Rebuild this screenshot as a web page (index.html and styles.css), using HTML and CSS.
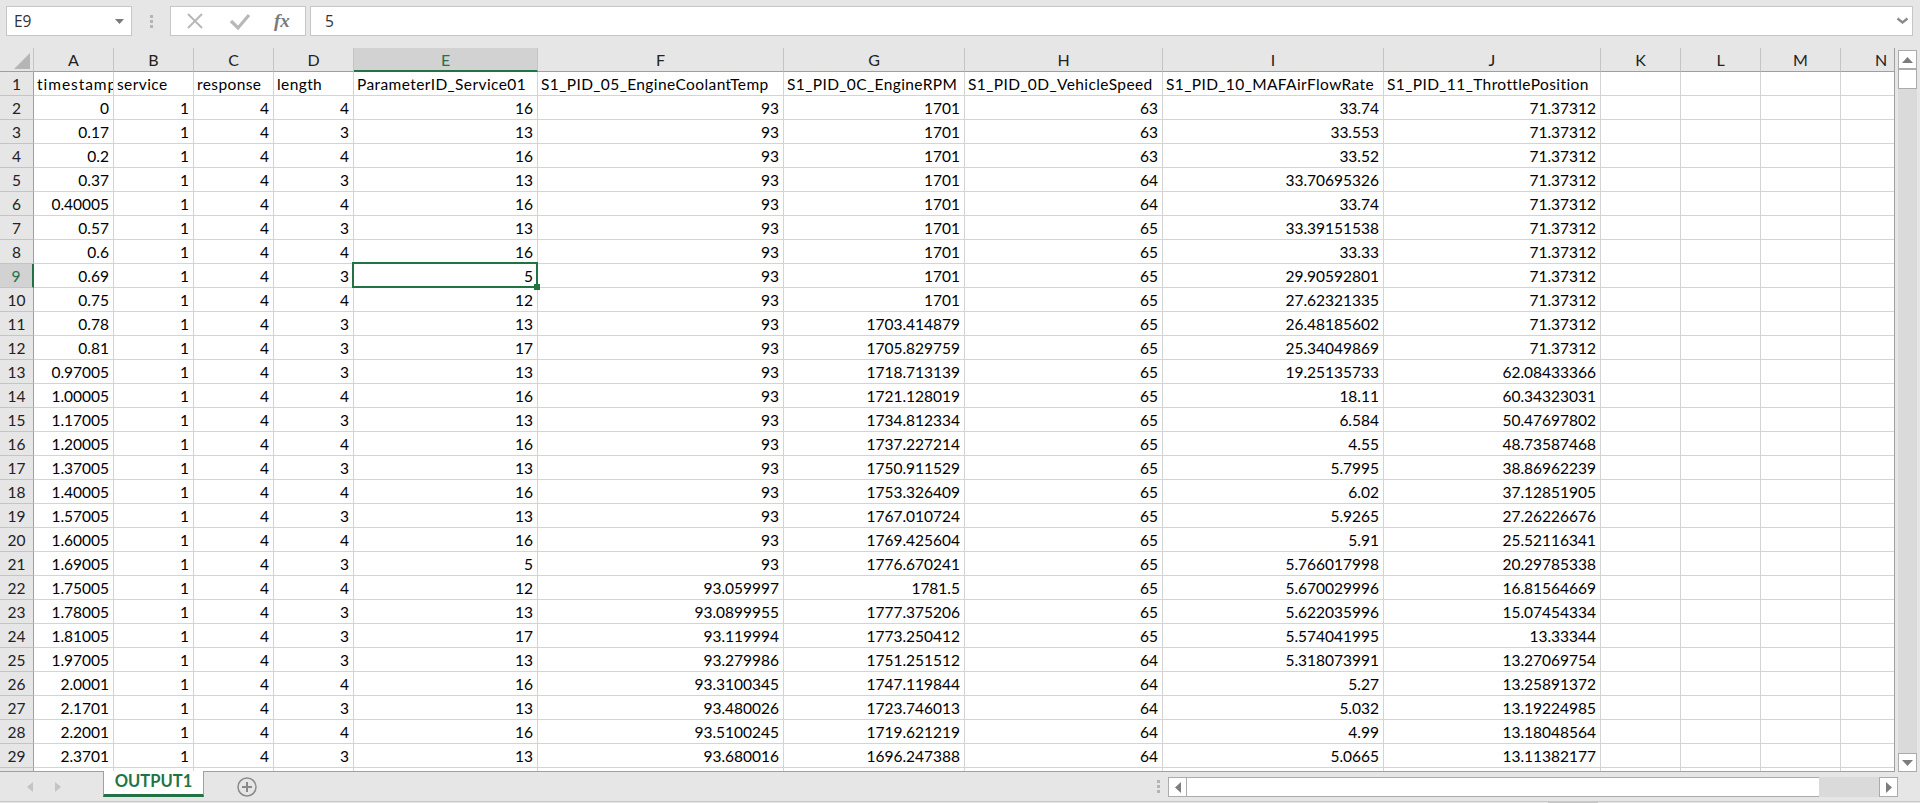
FILE: index.html
```html
<!DOCTYPE html>
<html lang="en">
<head>
<meta charset="utf-8">
<title>OUTPUT1</title>
<link rel="stylesheet" href="styles.css">
</head>
<body>
<div class="fbar">
  <div class="namebox"><span>E9</span><svg class="tri" width="9" height="5" viewBox="0 0 9 5"><path d="M0 0h9L4.500 5z"/></svg></div>
  <div class="grip"><i></i><i></i><i></i></div>
  <div class="fnbox">
    <svg width="20" height="20" viewBox="0 0 20 20" class="ic-x"><path d="M3 3l14 14M17 3L3 17"/></svg>
    <svg width="22" height="20" viewBox="0 0 22 20" class="ic-ok"><path d="M2 10l7 7L20 4"/></svg>
    <span class="fx">fx</span>
  </div>
  <div class="formula"><span>5</span><svg class="chev" width="13" height="8" viewBox="0 0 13 8"><path d="M1.500 1.500l5 4 5-4"/></svg></div>
</div>
<div class="sheet">
  <div class="gridwrap">
    <table class="grid">
      <colgroup><col class="c-rh"><col class="c-s"><col class="c-s"><col class="c-s"><col class="c-s"><col class="c-e"><col class="c-f"><col class="c-g"><col class="c-h"><col class="c-i"><col class="c-j"><col class="c-s"><col class="c-s"><col class="c-s"><col class="c-n"></colgroup>
      <thead><tr><th class="corner"><svg width="18" height="18" viewBox="0 0 18 18"><path d="M17 1v16H1z"/></svg></th><th>A</th><th>B</th><th>C</th><th>D</th><th class="on">E</th><th>F</th><th>G</th><th>H</th><th>I</th><th>J</th><th>K</th><th>L</th><th>M</th><th class="cut">N</th></tr></thead>
      <tbody>
<tr class="head"><th>1</th><td class="clip">timestamp</td><td>service</td><td>response</td><td>length</td><td>ParameterID_Service01</td><td>S1_PID_05_EngineCoolantTemp</td><td>S1_PID_0C_EngineRPM</td><td>S1_PID_0D_VehicleSpeed</td><td>S1_PID_10_MAFAirFlowRate</td><td>S1_PID_11_ThrottlePosition</td><td></td><td></td><td></td><td></td></tr>
<tr><th>2</th><td>0</td><td>1</td><td>4</td><td>4</td><td>16</td><td>93</td><td>1701</td><td>63</td><td>33.74</td><td>71.37312</td><td></td><td></td><td></td><td></td></tr>
<tr><th>3</th><td>0.17</td><td>1</td><td>4</td><td>3</td><td>13</td><td>93</td><td>1701</td><td>63</td><td>33.553</td><td>71.37312</td><td></td><td></td><td></td><td></td></tr>
<tr><th>4</th><td>0.2</td><td>1</td><td>4</td><td>4</td><td>16</td><td>93</td><td>1701</td><td>63</td><td>33.52</td><td>71.37312</td><td></td><td></td><td></td><td></td></tr>
<tr><th>5</th><td>0.37</td><td>1</td><td>4</td><td>3</td><td>13</td><td>93</td><td>1701</td><td>64</td><td>33.70695326</td><td>71.37312</td><td></td><td></td><td></td><td></td></tr>
<tr><th>6</th><td>0.40005</td><td>1</td><td>4</td><td>4</td><td>16</td><td>93</td><td>1701</td><td>64</td><td>33.74</td><td>71.37312</td><td></td><td></td><td></td><td></td></tr>
<tr><th>7</th><td>0.57</td><td>1</td><td>4</td><td>3</td><td>13</td><td>93</td><td>1701</td><td>65</td><td>33.39151538</td><td>71.37312</td><td></td><td></td><td></td><td></td></tr>
<tr><th>8</th><td>0.6</td><td>1</td><td>4</td><td>4</td><td>16</td><td>93</td><td>1701</td><td>65</td><td>33.33</td><td>71.37312</td><td></td><td></td><td></td><td></td></tr>
<tr><th class="on">9</th><td>0.69</td><td>1</td><td>4</td><td>3</td><td class="sel">5<span class="box"><span class="handle"></span></span></td><td>93</td><td>1701</td><td>65</td><td>29.90592801</td><td>71.37312</td><td></td><td></td><td></td><td></td></tr>
<tr><th>10</th><td>0.75</td><td>1</td><td>4</td><td>4</td><td>12</td><td>93</td><td>1701</td><td>65</td><td>27.62321335</td><td>71.37312</td><td></td><td></td><td></td><td></td></tr>
<tr><th>11</th><td>0.78</td><td>1</td><td>4</td><td>3</td><td>13</td><td>93</td><td>1703.414879</td><td>65</td><td>26.48185602</td><td>71.37312</td><td></td><td></td><td></td><td></td></tr>
<tr><th>12</th><td>0.81</td><td>1</td><td>4</td><td>3</td><td>17</td><td>93</td><td>1705.829759</td><td>65</td><td>25.34049869</td><td>71.37312</td><td></td><td></td><td></td><td></td></tr>
<tr><th>13</th><td>0.97005</td><td>1</td><td>4</td><td>3</td><td>13</td><td>93</td><td>1718.713139</td><td>65</td><td>19.25135733</td><td>62.08433366</td><td></td><td></td><td></td><td></td></tr>
<tr><th>14</th><td>1.00005</td><td>1</td><td>4</td><td>4</td><td>16</td><td>93</td><td>1721.128019</td><td>65</td><td>18.11</td><td>60.34323031</td><td></td><td></td><td></td><td></td></tr>
<tr><th>15</th><td>1.17005</td><td>1</td><td>4</td><td>3</td><td>13</td><td>93</td><td>1734.812334</td><td>65</td><td>6.584</td><td>50.47697802</td><td></td><td></td><td></td><td></td></tr>
<tr><th>16</th><td>1.20005</td><td>1</td><td>4</td><td>4</td><td>16</td><td>93</td><td>1737.227214</td><td>65</td><td>4.55</td><td>48.73587468</td><td></td><td></td><td></td><td></td></tr>
<tr><th>17</th><td>1.37005</td><td>1</td><td>4</td><td>3</td><td>13</td><td>93</td><td>1750.911529</td><td>65</td><td>5.7995</td><td>38.86962239</td><td></td><td></td><td></td><td></td></tr>
<tr><th>18</th><td>1.40005</td><td>1</td><td>4</td><td>4</td><td>16</td><td>93</td><td>1753.326409</td><td>65</td><td>6.02</td><td>37.12851905</td><td></td><td></td><td></td><td></td></tr>
<tr><th>19</th><td>1.57005</td><td>1</td><td>4</td><td>3</td><td>13</td><td>93</td><td>1767.010724</td><td>65</td><td>5.9265</td><td>27.26226676</td><td></td><td></td><td></td><td></td></tr>
<tr><th>20</th><td>1.60005</td><td>1</td><td>4</td><td>4</td><td>16</td><td>93</td><td>1769.425604</td><td>65</td><td>5.91</td><td>25.52116341</td><td></td><td></td><td></td><td></td></tr>
<tr><th>21</th><td>1.69005</td><td>1</td><td>4</td><td>3</td><td>5</td><td>93</td><td>1776.670241</td><td>65</td><td>5.766017998</td><td>20.29785338</td><td></td><td></td><td></td><td></td></tr>
<tr><th>22</th><td>1.75005</td><td>1</td><td>4</td><td>4</td><td>12</td><td>93.059997</td><td>1781.5</td><td>65</td><td>5.670029996</td><td>16.81564669</td><td></td><td></td><td></td><td></td></tr>
<tr><th>23</th><td>1.78005</td><td>1</td><td>4</td><td>3</td><td>13</td><td>93.0899955</td><td>1777.375206</td><td>65</td><td>5.622035996</td><td>15.07454334</td><td></td><td></td><td></td><td></td></tr>
<tr><th>24</th><td>1.81005</td><td>1</td><td>4</td><td>3</td><td>17</td><td>93.119994</td><td>1773.250412</td><td>65</td><td>5.574041995</td><td>13.33344</td><td></td><td></td><td></td><td></td></tr>
<tr><th>25</th><td>1.97005</td><td>1</td><td>4</td><td>3</td><td>13</td><td>93.279986</td><td>1751.251512</td><td>64</td><td>5.318073991</td><td>13.27069754</td><td></td><td></td><td></td><td></td></tr>
<tr><th>26</th><td>2.0001</td><td>1</td><td>4</td><td>4</td><td>16</td><td>93.3100345</td><td>1747.119844</td><td>64</td><td>5.27</td><td>13.25891372</td><td></td><td></td><td></td><td></td></tr>
<tr><th>27</th><td>2.1701</td><td>1</td><td>4</td><td>3</td><td>13</td><td>93.480026</td><td>1723.746013</td><td>64</td><td>5.032</td><td>13.19224985</td><td></td><td></td><td></td><td></td></tr>
<tr><th>28</th><td>2.2001</td><td>1</td><td>4</td><td>4</td><td>16</td><td>93.5100245</td><td>1719.621219</td><td>64</td><td>4.99</td><td>13.18048564</td><td></td><td></td><td></td><td></td></tr>
<tr><th>29</th><td>2.3701</td><td>1</td><td>4</td><td>3</td><td>13</td><td>93.680016</td><td>1696.247388</td><td>64</td><td>5.0665</td><td>13.11382177</td><td></td><td></td><td></td><td></td></tr>
<tr><th></th><td></td><td></td><td></td><td></td><td></td><td></td><td></td><td></td><td></td><td></td><td></td><td></td><td></td><td></td></tr>
      </tbody>
    </table>
  </div>
  <div class="vscroll">
    <div class="sbtn"><svg width="11" height="6" viewBox="0 0 11 6"><path d="M5.500 0L11 6H0z"/></svg></div>
    <div class="vthumb"></div>
    <div class="vtrack"></div>
    <div class="sbtn"><svg width="11" height="6" viewBox="0 0 11 6"><path d="M0 0h11L5.500 6z"/></svg></div>
  </div>
</div>
<div class="tabs">
  <div class="nav">
    <svg width="6" height="10" viewBox="0 0 6 10"><path d="M6 0v10L0 5z"/></svg>
    <svg width="6" height="10" viewBox="0 0 6 10"><path d="M0 0v10l6-5z"/></svg>
  </div>
  <div class="tab">OUTPUT1</div>
  <svg class="add" width="20" height="20" viewBox="0 0 20 20"><circle cx="10" cy="10" r="9"/><path d="M10 5v10M5 10h10"/></svg>
  <div class="grip hgrip"><i></i><i></i><i></i></div>
  <div class="hscroll">
    <div class="sbtn hbtn"><svg width="6" height="11" viewBox="0 0 6 11"><path d="M6 0v11L0 5.500z"/></svg></div>
    <div class="hthumb"></div>
    <div class="htrack"></div>
    <div class="sbtn hbtn"><svg width="6" height="11" viewBox="0 0 6 11"><path d="M0 0v11l6-5.500z"/></svg></div>
  </div>
</div>
<div class="status"><div class="sliver"></div></div>
</body>
</html>
```
FILE: styles.css
```css
* { box-sizing: border-box; }
html, body { margin: 0; padding: 0; }
body {
  width: 1920px;
  height: 803px;
  overflow: hidden;
  display: flex;
  flex-direction: column;
  background: #e6e6e6;
  font-family: Lato, "Liberation Sans", sans-serif;
  color: #000;
}

/* formula bar */
.fbar {
  height: 48px;
  flex: none;
  display: flex;
  align-items: flex-start;
  padding: 6px 7px 0 6px;
  font-family: "Open Sans", "Liberation Sans", sans-serif;
  font-size: 15.500px;
  color: #333;
}
.namebox, .fnbox, .formula {
  height: 30px;
  background: #fff;
  border: 1px solid #c6c6c6;
  display: flex;
  align-items: center;
}
.namebox { width: 126px; padding: 0 7px; justify-content: space-between; }
.tri path { fill: #7a7a7a; }
.grip { width: 38px; height: 30px; display: flex; flex-direction: column; align-items: center; justify-content: center; gap: 2px; }
.grip i { width: 3px; height: 3px; background: #b4b4b4; display: block; }
.fnbox { width: 136px; margin-right: 4px; padding-left: 14px; }
.ic-x path { fill: none; stroke: #b8b8b8; stroke-width: 2; }
.ic-ok { margin-left: 24px; }
.ic-ok path { fill: none; stroke: #b8b8b8; stroke-width: 3.200; }
.fx {
  margin-left: 23px;
  font-family: "Liberation Serif", serif;
  font-style: italic;
  font-weight: bold;
  font-size: 19px;
  color: #7a7a7a;
}
.formula { flex: 1; padding: 0 3px 0 14px; justify-content: space-between; }
.chev path { fill: none; stroke: #8a8a8a; stroke-width: 2.400; }

/* sheet */
.sheet { height: 724px; flex: none; display: flex; }
.gridwrap {
  width: 1895px;
  height: 724px;
  overflow: hidden;
  background: #fff;
  border-right: 1px solid #a0a0a0;
  border-bottom: 1px solid #a0a0a0;
}
.grid {
  table-layout: fixed;
  border-collapse: separate;
  border-spacing: 0;
  width: 1895px;
  font-size: 15.500px;
}
.c-rh { width: 34px; }
.c-s { width: 80px; }
.c-e { width: 184px; }
.c-f { width: 246px; }
.c-g { width: 181px; }
.c-h { width: 198px; }
.c-i { width: 221px; }
.c-j { width: 217px; }
.c-n { width: 54px; }
.grid tr { height: 24px; }
.grid th {
  padding: 0;
  background: #e6e6e6;
  font-weight: normal;
  text-align: center;
  color: #222;
  border-right: 1px solid #c4c4c4;
  border-bottom: 1px solid #c4c4c4;
}
.grid thead th {
  font-size: 16px;
  border-bottom: 1px solid #9f9f9f;
  height: 24px;
}
.grid thead th.cut { padding-left: 26px; overflow: hidden; border-right: 0; }
.grid tbody th { border-right: 1px solid #9f9f9f; }
.grid thead th.on {
  background: #d2d2d2;
  color: #217346;
  border-bottom: 2px solid #217346;
}
.grid tbody th.on {
  background: #d2d2d2;
  color: #217346;
  border-right: 2px solid #217346;
}
.corner svg { display: block; margin: 3px 0 0 13px; }
.corner path { fill: #b5b5b5; }
.grid td {
  padding: 0 4px 0 3px;
  border-right: 1px solid #d4d4d4;
  border-bottom: 1px solid #d4d4d4;
  text-align: right;
  white-space: nowrap;
  overflow: hidden;
  line-height: 20px;
  color: #000;
}
.grid tr.head td { text-align: left; letter-spacing: 0.400px; }
.grid tr.head td.clip { letter-spacing: 0.950px; padding-right: 0; text-overflow: clip; }
.grid td.sel { position: relative; overflow: visible; }
.box {
  position: absolute;
  top: -2px;
  left: -2px;
  right: -1px;
  bottom: -1px;
  border: 2px solid #217346;
}
.handle {
  position: absolute;
  right: -4px;
  bottom: -4px;
  width: 6px;
  height: 6px;
  background: #217346;
}

/* scrollbars */
.sbtn {
  background: #fff;
  border: 1px solid #ababab;
  display: flex;
  align-items: center;
  justify-content: center;
  flex: none;
}
.sbtn path { fill: #7d7d7d; }
.vscroll {
  margin-left: 3px;
  width: 19px;
  padding-top: 2px;
  display: flex;
  flex-direction: column;
}
.vscroll .sbtn { height: 19px; }
.vthumb { height: 20px; flex: none; background: #fff; border: 1px solid #ababab; }
.vtrack { flex: 1; background: #dadada; }

/* sheet tabs */
.tabs {
  height: 30px;
  flex: none;
  display: flex;
  align-items: flex-start;
  background: #e6e6e6;
  border-bottom: 1px solid #c8c8c8;
}
.nav { width: 103px; padding: 10px 0 0 27px; display: flex; gap: 22px; }
.nav path { fill: #c4c4c4; }
.tab {
  width: 101px;
  height: 26px;
  margin-top: -1px;
  background: #fff;
  border-left: 1px solid #a0a0a0;
  border-right: 1px solid #a0a0a0;
  border-bottom: 3px solid #217346;
  color: #217346;
  font-weight: bold;
  font-size: 16.500px;
  text-align: center;
  line-height: 21px;
  position: relative;
}
.add { margin: 5px 0 0 33px; }
.add circle { fill: none; stroke: #8a8a8a; stroke-width: 1.500; }
.add path { stroke: #8a8a8a; stroke-width: 2; }
.hgrip { width: 20px; height: 19px; margin: 5px 0 0 891px; }
.hscroll {
  width: 730px;
  height: 20px;
  margin-top: 5px;
  display: flex;
}
.hbtn { width: 19px; height: 20px; }
.hthumb { flex: none; width: 632px; background: #fff; border-top: 1px solid #ababab; border-bottom: 1px solid #ababab; }
.htrack { flex: 1; background: #dadada; }

/* status sliver */
.status { height: 2px; flex: none; padding-left: 1548px; }
.sliver { width: 50px; height: 2px; background: #c6c6c6; }
```
